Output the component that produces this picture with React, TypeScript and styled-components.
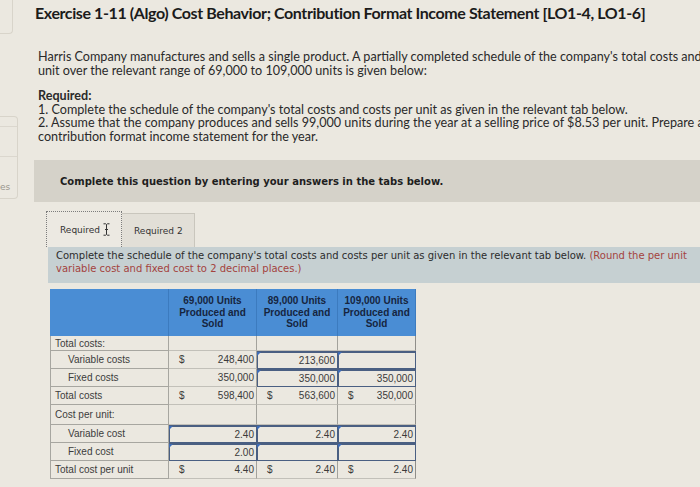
import React from 'react';
import styled, { createGlobalStyle } from 'styled-components';

const Global = createGlobalStyle`
  html, body { margin: 0; padding: 0; background: #ebe8e0; }
  body { width: 700px; height: 487px; overflow: hidden; }
`;

const Page = styled.div`
  width: 700px;
  height: 487px;
  overflow: hidden;
  display: flex;
  background: #ebe8e0;
  color: #222;
`;

const Sidebar = styled.aside`
  width: 20px;
  flex: none;
  display: flex;
  flex-direction: column;
`;

const SideTop = styled.div`
  width: 12px;
  height: 33px;
  border: 1px solid #d8d4ca;
  border-left: none;
  border-top: none;
  border-radius: 0 0 4px 0;
`;

const SideList = styled.div`
  margin-top: 82px;
  width: 17px;
  border: 1px solid #d8d4ca;
  border-left: none;
  border-radius: 0 4px 4px 0;
  display: flex;
  flex-direction: column;
`;

const SideItem = styled.div<{ $h: number }>`
  height: ${(p) => p.$h}px;
  border-bottom: 1px solid #dbd7ce;
  font: 9px "DejaVu Sans", sans-serif;
  color: #9a978f;
  display: flex;
  align-items: flex-end;
  padding-bottom: 6px;
  box-sizing: border-box;
  &:last-child { border-bottom: none; }
`;

const Main = styled.main`
  flex: 1;
  min-width: 0;
  padding-left: 14px;
  display: flex;
  flex-direction: column;
`;

const Title = styled.h1`
  margin: 2px 0 0 1px;
  font: 700 16px/22px Lato, "Liberation Sans", sans-serif;
  letter-spacing: -0.4px;
  white-space: nowrap;
  color: #1b1b1b;
`;

const Para = styled.div<{ $top: number }>`
  margin: ${(p) => p.$top}px 0 0 4px;
  font: 400 12.6px/13.5px Lato, "Liberation Sans", sans-serif;
  color: #2a2a2a;
  white-space: nowrap;
`;

const Line = styled.div``;

const Bold = styled.div`
  font-weight: 700;
`;

const QuestionBar = styled.div`
  margin-top: 17px;
  height: 42px;
  background: #d5d2c9;
  display: flex;
  align-items: center;
  padding-left: 26px;
  font: 700 10px "DejaVu Sans", sans-serif;
  color: #1e1e1e;
  white-space: nowrap;
`;

const TabsArea = styled.section`
  margin: 9px 0 0 12px;
  display: flex;
  flex-direction: column;
`;

const TabRow = styled.div`
  display: flex;
  align-items: flex-end;
  height: 36px;
`;

const Tab = styled.div<{ $active?: boolean }>`
  box-sizing: border-box;
  height: ${(p) => (p.$active ? 36 : 34)}px;
  width: ${(p) => (p.$active ? 76 : 73)}px;
  display: flex;
  align-items: center;
  gap: 3px;
  padding-left: ${(p) => (p.$active ? 13 : 12)}px;
  font: 9px "DejaVu Sans", sans-serif;
  color: #333;
  background: ${(p) => (p.$active ? '#ece9e2' : '#e2dfd7')};
  border: ${(p) => (p.$active ? '1px dotted #7c7c7c' : '1px solid #c9c6bd')};
  border-bottom: none;
  ${(p) => (p.$active ? '' : 'border-left: none;')}
`;

const Instruction = styled.div`
  margin-left: 2px;
  box-sizing: border-box;
  height: 36px;
  padding: 2px 0 0 8px;
  background: #c6d0d2;
  font: 10px/13px "DejaVu Sans", sans-serif;
  color: #2c2c2c;
  white-space: nowrap;
`;

const Red = styled.span`
  color: #a4433e;
`;

const Grid = styled.div`
  margin: 6px 0 0 4px;
  display: grid;
  grid-template-columns: 119px 88px 81px 78px;
  grid-template-rows: 47px 15px 18px 18px 18px 20px 18px 18px 18px;
  font: 10px "Liberation Sans", Arial, sans-serif;
  color: #3a3a3a;
`;

const HeadCell = styled.div`
  background: #4a8dd4;
  border-right: 1px solid #3c7bbf;
  display: flex;
  align-items: center;
  justify-content: center;
  text-align: center;
  font: 700 10px/11.5px "Liberation Sans", Arial, sans-serif;
  color: #16253f;
  &:last-child { border-right: none; }
`;

const LabelCell = styled.div<{ $indent?: boolean }>`
  box-sizing: border-box;
  border: 1px solid #a7a6a0;
  border-top: none;
  display: flex;
  align-items: center;
  padding-left: ${(p) => (p.$indent ? 17 : 4)}px;
  color: #3c3c3c;
  white-space: nowrap;
`;

const ValueCell = styled.div<{ $last?: boolean }>`
  box-sizing: border-box;
  position: relative;
  border-right: 1px solid ${(p) => (p.$last ? '#8f8e8a' : '#a3a29c')};
  border-bottom: 1px solid #c2c0b9;
  display: flex;
  align-items: center;
  justify-content: space-between;
  padding: 0 2px 0 10px;
  white-space: nowrap;
`;

const InputBox = styled.div`
  box-sizing: border-box;
  position: relative;
  border: 1px solid #4a5f82;
  border-top-width: 2px;
  display: flex;
  align-items: center;
  justify-content: flex-end;
  padding-right: 2px;
  white-space: nowrap;
  &::before {
    content: '';
    position: absolute;
    top: -1px;
    left: -1px;
    border-left: 4px solid #3d6bb5;
    border-bottom: 4px solid transparent;
  }
`;

const Dollar = styled.span``;

type Cell =
  | { t: 'v'; d?: boolean; n?: string }
  | { t: 'i'; n?: string };

type Row = { label: string; indent?: boolean; cells: Cell[] };

const rows: Row[] = [
  { label: 'Total costs:', cells: [{ t: 'v' }, { t: 'v' }, { t: 'v' }] },
  { label: 'Variable costs', indent: true, cells: [{ t: 'v', d: true, n: '248,400' }, { t: 'i', n: '213,600' }, { t: 'i' }] },
  { label: 'Fixed costs', indent: true, cells: [{ t: 'v', n: '350,000' }, { t: 'i', n: '350,000' }, { t: 'i', n: '350,000' }] },
  { label: 'Total costs', cells: [{ t: 'v', d: true, n: '598,400' }, { t: 'v', d: true, n: '563,600' }, { t: 'v', d: true, n: '350,000' }] },
  { label: 'Cost per unit:', cells: [{ t: 'v' }, { t: 'v' }, { t: 'v' }] },
  { label: 'Variable cost', indent: true, cells: [{ t: 'i', n: '2.40' }, { t: 'i', n: '2.40' }, { t: 'i', n: '2.40' }] },
  { label: 'Fixed cost', indent: true, cells: [{ t: 'i', n: '2.00' }, { t: 'i' }, { t: 'i' }] },
  { label: 'Total cost per unit', cells: [{ t: 'v', d: true, n: '4.40' }, { t: 'v', d: true, n: '2.40' }, { t: 'v', d: true, n: '2.40' }] },
];

const heads = [
  ['69,000 Units', 'Produced and', 'Sold'],
  ['89,000 Units', 'Produced and', 'Sold'],
  ['109,000 Units', 'Produced and', 'Sold'],
];

const IBeam = () => (
  <svg width="7" height="13" viewBox="0 0 7 13" aria-hidden>
    <path d="M0.5 0.8h2.2l0.8 0.8 0.8-0.8h2.2M3.5 1.6v9.8M0.5 12.2h2.2l0.8-0.8 0.8 0.8h2.2M2 6.5h3" stroke="#333" strokeWidth="1" fill="none" />
  </svg>
);

export default function App() {
  return (
    <>
      <Global />
      <Page>
        <Sidebar>
          <SideTop />
          <SideList>
            <SideItem $h={10} />
            <SideItem $h={30} />
            <SideItem $h={41}>es</SideItem>
          </SideList>
        </Sidebar>
        <Main>
          <Title>Exercise 1-11 (Algo) Cost Behavior; Contribution Format Income Statement [LO1-4, LO1-6]</Title>
          <Para $top={26}>
            <Line>Harris Company manufactures and sells a single product. A partially completed schedule of the company's total costs and costs per</Line>
            <Line>unit over the relevant range of 69,000 to 109,000 units is given below:</Line>
          </Para>
          <Para $top={12}>
            <Bold>Required:</Bold>
            <Line>1. Complete the schedule of the company's total costs and costs per unit as given in the relevant tab below.</Line>
            <Line>2. Assume that the company produces and sells 99,000 units during the year at a selling price of $8.53 per unit. Prepare a</Line>
            <Line>contribution format income statement for the year.</Line>
          </Para>
          <QuestionBar>Complete this question by entering your answers in the tabs below.</QuestionBar>
          <TabsArea>
            <TabRow>
              <Tab $active>
                Required <IBeam />
              </Tab>
              <Tab>Required 2</Tab>
            </TabRow>
            <Instruction>
              <Line>
                Complete the schedule of the company's total costs and costs per unit as given in the relevant tab below.{' '}
                <Red>(Round the per unit</Red>
              </Line>
              <Line>
                <Red>variable cost and fixed cost to 2 decimal places.)</Red>
              </Line>
            </Instruction>
            <Grid>
              <HeadCell />
              {heads.map((h) => (
                <HeadCell key={h[0]}>
                  {h[0]}
                  <br />
                  {h[1]}
                  <br />
                  {h[2]}
                </HeadCell>
              ))}
              {rows.map((r) => (
                <React.Fragment key={r.label}>
                  <LabelCell $indent={r.indent}>{r.label}</LabelCell>
                  {r.cells.map((c, i) =>
                    c.t === 'i' ? (
                      <InputBox key={i}>{c.n}</InputBox>
                    ) : (
                      <ValueCell key={i} $last={i === 2}>
                        <Dollar>{c.d ? '$' : ''}</Dollar>
                        <span>{c.n}</span>
                      </ValueCell>
                    )
                  )}
                </React.Fragment>
              ))}
            </Grid>
          </TabsArea>
        </Main>
      </Page>
    </>
  );
}
